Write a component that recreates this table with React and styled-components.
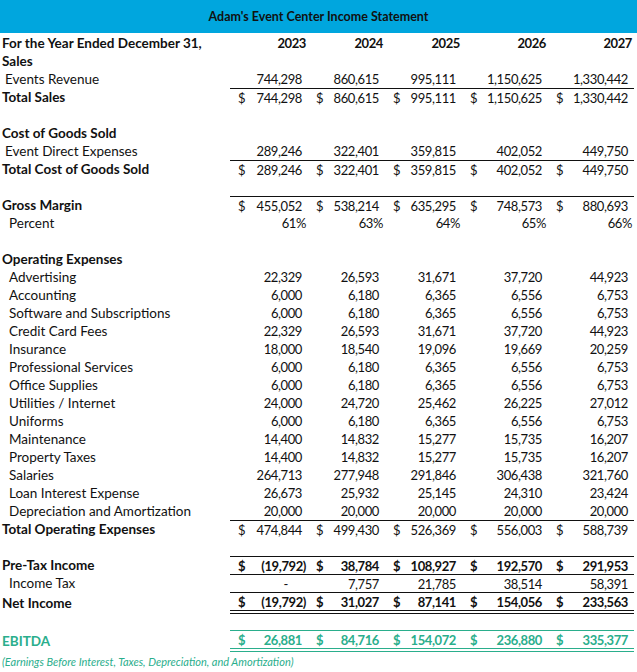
import React from "react";
import styled, { createGlobalStyle } from "styled-components";

const COLS = "230px 78px 77px 77px 86px 86px";
const INK = "#111";
const GREEN = "#2aae8c";

const GlobalStyle = createGlobalStyle`
  body {
    margin: 0;
    background: #fff;
    font-family: Lato, "Open Sans", sans-serif;
    color: ${INK};
  }
`;

const Sheet = styled.div`
  width: 637px;
  font-size: 13.5px;
`;

const TitleBar = styled.div`
  height: 33px;
  margin-bottom: 1px;
  background: #00a6de;
  display: flex;
  align-items: center;
  justify-content: center;
  font-weight: 700;
  font-size: 12.5px;
`;

const Row = styled.div`
  display: grid;
  grid-template-columns: ${COLS};
  height: ${(p) => p.$h || 18}px;
`;

const Label = styled.div`
  display: flex;
  align-items: center;
  padding-left: ${(p) => p.$indent}px;
  font-weight: ${(p) => (p.$bold ? 700 : 400)};
  color: ${(p) => p.$color || INK};
  white-space: nowrap;
`;

const YearCell = styled.div`
  display: flex;
  align-items: center;
  justify-content: flex-end;
  padding-right: 2px;
  font-weight: 700;
  font-size: 13px;
  letter-spacing: -0.4px;
  font-variant-numeric: tabular-nums;
`;

const NumCell = styled.div`
  box-sizing: border-box;
  display: flex;
  align-items: center;
  border-top: ${(p) => (p.$top ? `1px solid ${p.$line}` : "none")};
  border-bottom: ${(p) => (p.$double ? `4px double ${p.$line}` : "none")};
  font-weight: ${(p) => (p.$bold ? 700 : 400)};
  font-size: 13px;
  letter-spacing: -0.4px;
  font-variant-numeric: tabular-nums;
  color: ${(p) => p.$color || INK};
  white-space: nowrap;
`;

const Dollar = styled.span`
  padding-left: 8px;
`;

const Value = styled.span`
  margin-left: auto;
  padding-right: ${(p) => p.$pad}px;
`;

const Note = styled.div`
  height: 18px;
  display: flex;
  align-items: center;
  padding-left: 2px;
  font-style: italic;
  font-size: 11px;
  color: ${GREEN};
`;

const years = [2023, 2024, 2025, 2026, 2027];

const opex = [
  ["Advertising", [22329, 26593, 31671, 37720, 44923]],
  ["Accounting", [6000, 6180, 6365, 6556, 6753]],
  ["Software and Subscriptions", [6000, 6180, 6365, 6556, 6753]],
  ["Credit Card Fees", [22329, 26593, 31671, 37720, 44923]],
  ["Insurance", [18000, 18540, 19096, 19669, 20259]],
  ["Professional Services", [6000, 6180, 6365, 6556, 6753]],
  ["Office Supplies", [6000, 6180, 6365, 6556, 6753]],
  ["Utilities / Internet", [24000, 24720, 25462, 26225, 27012]],
  ["Uniforms", [6000, 6180, 6365, 6556, 6753]],
  ["Maintenance", [14400, 14832, 15277, 15735, 16207]],
  ["Property Taxes", [14400, 14832, 15277, 15735, 16207]],
  ["Salaries", [264713, 277948, 291846, 306438, 321760]],
  ["Loan Interest Expense", [26673, 25932, 25145, 24310, 23424]],
  ["Depreciation and Amortization", [20000, 20000, 20000, 20000, 20000]],
];

const rows = [
  { label: "Sales", bold: true },
  { label: "Events Revenue", indent: 5, values: [744298, 860615, 995111, 1150625, 1330442] },
  { label: "Total Sales", bold: true, dollar: true, top: true, values: [744298, 860615, 995111, 1150625, 1330442] },
  {},
  { label: "Cost of Goods Sold", bold: true },
  { label: "Event Direct Expenses", indent: 5, values: [289246, 322401, 359815, 402052, 449750] },
  { label: "Total Cost of Goods Sold", bold: true, dollar: true, top: true, values: [289246, 322401, 359815, 402052, 449750] },
  {},
  { label: "Gross Margin", bold: true, dollar: true, top: true, values: [455052, 538214, 635295, 748573, 880693] },
  { label: "Percent", indent: 9, pct: [61, 63, 64, 65, 66] },
  {},
  { label: "Operating Expenses", bold: true },
  ...opex.map(([label, values]) => ({ label, indent: 9, values })),
  { label: "Total Operating Expenses", bold: true, dollar: true, top: true, values: [474844, 499430, 526369, 556003, 588739] },
  {},
  { label: "Pre-Tax Income", bold: true, boldNum: true, dollar: true, top: true, values: [-19792, 38784, 108927, 192570, 291953] },
  { label: "Income Tax", indent: 9, top: true, values: [0, 7757, 21785, 38514, 58391] },
  { label: "Net Income", bold: true, boldNum: true, dollar: true, top: true, double: true, h: 22, values: [-19792, 31027, 87141, 154056, 233563] },
  { h: 16 },
  { label: "EBITDA", bold: true, boldNum: true, dollar: true, top: true, double: true, h: 22, color: GREEN, values: [26881, 84716, 154072, 236880, 335377] },
];

const fmt = (n) => {
  if (n === 0) return { text: "-", pad: 20 };
  if (n < 0) return { text: `(${Math.abs(n).toLocaleString("en-US")})`, pad: 2 };
  return { text: n.toLocaleString("en-US"), pad: 6 };
};

const StatementRow = ({ row }) => {
  const line = row.color || INK;
  return (
    <Row $h={row.h}>
      <Label $indent={row.indent || 2} $bold={row.bold} $color={row.color}>
        {row.label}
      </Label>
      {row.values &&
        row.values.map((v, i) => {
          const { text, pad } = fmt(v);
          return (
            <NumCell
              key={i}
              $top={row.top}
              $double={row.double}
              $line={line}
              $bold={row.boldNum}
              $color={row.color}
            >
              {row.dollar && <Dollar>$</Dollar>}
              <Value $pad={pad}>{text}</Value>
            </NumCell>
          );
        })}
      {row.pct &&
        row.pct.map((p, i) => (
          <NumCell key={i}>
            <Value $pad={2}>{p}%</Value>
          </NumCell>
        ))}
    </Row>
  );
};

export default function App() {
  return (
    <>
      <GlobalStyle />
      <Sheet>
        <TitleBar>Adam's Event Center Income Statement</TitleBar>
        <Row>
          <Label $indent={2} $bold>
            For the Year Ended December 31,
          </Label>
          {years.map((y) => (
            <YearCell key={y}>{y}</YearCell>
          ))}
        </Row>
        {rows.map((row, i) => (
          <StatementRow key={i} row={row} />
        ))}
        <Note>(Earnings Before Interest, Taxes, Depreciation, and Amortization)</Note>
      </Sheet>
    </>
  );
}
